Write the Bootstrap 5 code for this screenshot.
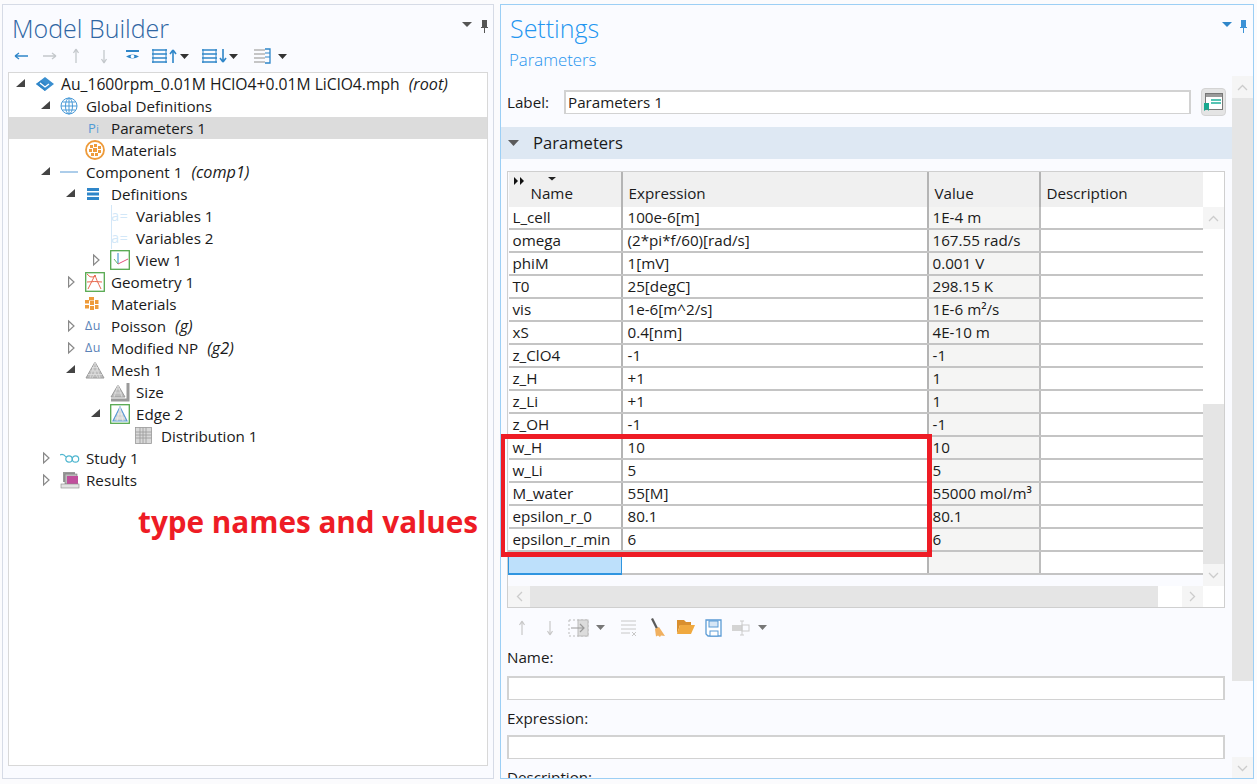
<!DOCTYPE html>
<html lang="en"><head><meta charset="utf-8"><title>Model Builder</title>
<link href="https://cdn.jsdelivr.net/npm/bootstrap@5.3.0/dist/css/bootstrap.min.css" rel="stylesheet">
<style>
html,body{height:784px;overflow:hidden}
body{background:#fbfbfd;font-family:"Open Sans","Noto Sans",sans-serif;font-size:15.2px;color:#1a1a1a;padding:4px 3px 0 2px;line-height:22px}
svg{display:block;flex:none}
.panel{height:775px;background:#fafbff;border:1px solid #d6dbe6;overflow:hidden;position:relative}
.left{width:492px;margin-right:6px;padding:0 5px}
.right{width:754px;border-color:#9ccff5}
.ptitle{font-weight:300;font-size:25px;line-height:34px;color:#2f66a3;padding-left:4px;padding-top:6px}
.right .ptitle{color:#2396f0;padding-left:9px}
.sub{font-size:16.8px;font-weight:300;color:#2694ee;line-height:24px;padding-left:8px;margin-top:3px}
.pin{position:absolute;top:14px}
.pinl{left:457px}.pinr{left:721px}
.tbar{height:24px;padding-left:6px;margin-top:-1px}
.tree{height:694px;background:#fff;border:1px solid #d8d8d8;margin-top:4px}
.r{height:22px;white-space:nowrap;font-size:15.2px}
.r.sel{background:#dcdcdc}
.rootname{font-size:15.7px}
.l0{padding-left:6px}.l1{padding-left:31px}.l2{padding-left:56px}.l3{padding-left:81px}.l4{padding-left:106px}
.tri{width:20px;flex:none;display:flex}
.ic{width:26px;flex:none;display:flex;align-items:center;height:22px;position:relative}
.gly{font-size:13px;color:#4f9ad6;letter-spacing:.5px;line-height:22px}
.gly small{font-size:10px}
.gly.vr{color:#4ea4e6;font-size:14.5px;font-weight:500;margin-left:1px}
.gly.pi{margin-left:3px}
.gly.du{color:#5b83b8;font-size:12.5px}
.a{font-style:italic;margin-left:9px;font-size:16.2px}
.note{position:absolute;left:135px;top:497px;color:#ee1c25;font-weight:700;font-size:29.7px;line-height:40px;white-space:nowrap}
.head{height:71px}
.body2{height:703px}
.main{width:731px;overflow:hidden;padding:0 6px}
.lab{height:51px}
.lab label{width:57px}
.fld{height:24px;background:#fff;border:2px solid #d2d2d2;border-bottom-width:1px;padding-left:2px;line-height:20px}
.lab .fld{width:627px}
.helpb{width:25px;height:28px;background:#e4e4e4;border:1px solid #d4d4d4;border-radius:4px;margin-left:10px}
.sec{height:32px;background:#dee8f3;margin:0 -6px;padding-left:7px;font-size:16.6px}
.sec span{margin-left:13px}
.grid{margin-top:12px;width:718px;height:437px;border:solid #cfcfcf;border-width:1px 1px 2px 1px}
.cols{height:414px}
.tw{width:695px}
.ptable{table-layout:fixed;width:695px;border-collapse:collapse;margin:0;font-size:15.2px}
.c1{width:113px}.c2{width:306px}.c3{width:112px}
.ptable>:not(caption)>*>*{padding:0 0 0 4px;height:23px;line-height:20px;border:0;border-bottom:2px solid #c4c4c4;border-right:2px solid #b4b4b4;background:#fff;white-space:nowrap;overflow:hidden;color:#1a1a1a;box-shadow:none}
.ptable>thead>tr>th{height:35px;background:#f0f0f0;font-weight:400;padding:0 0 4px 6px;border-bottom:0;position:relative;vertical-align:bottom}
.ptable>thead>tr>th.n{padding-left:22px}
.ptable>thead>tr>th.dh{border-right:0}
.ptable>tbody>tr>td:nth-child(2){padding-left:5px}
.ptable>tbody>tr>td.v{background:#f5f5f4;padding-left:4px;border-right-color:#bdbdbd}
.ptable>tbody>tr>td.d{border-right:0}
.ptable>tbody>tr>td.cur{background:#bde0fb;border:1px solid #2f95e0;border-bottom:2px solid #2f95e0}
.ptable>tbody>tr:first-child>*{height:22px}
.vs{width:21px}
.vs .sp{height:35px;background:#fff}
.sb{background:#f5f5f5;height:22px}
.wh{background:#fff}
.gr{background:#e5e5e5}
.vthumb{height:160px}
.othumb{height:583px}
.hs{height:21px}
.hs .sb{height:21px}
.hl{width:22px}.htrack{width:628px}.hgap{width:24px}.hr{width:21px}
.tool2{height:39px;padding-left:8px}
.tlabel{height:20px;line-height:20px;margin-top:1px}
.tool2+.tlabel{margin-top:0}
.grid-f{height:24px;width:718px;margin-top:7px;margin-bottom:8px}
.tool2+.tlabel+.grid-f{margin-top:9px}
.cut{line-height:20px;margin-top:4px}
.ovs{width:21px}
.box{position:absolute;left:-1px;top:429px;width:432px;height:123px;border:5px solid #ee1c25;pointer-events:none}
</style></head>
<body class="d-flex align-items-start">
<svg width="0" height="0" class="position-absolute"><defs>
 <symbol id="open" viewBox="0 0 20 22"><path d="M1 14h9V6z" fill="#444"/></symbol>
 <symbol id="closed" viewBox="0 0 20 22"><path d="M3.600 6l5.400 5-5.400 5z" fill="#fff" stroke="#888" stroke-width="1.200"/></symbol>
 <symbol id="up" viewBox="0 0 11 7"><path d="M1 6l4.500-4.500L10 6" fill="none" stroke="#ccc" stroke-width="1.300"/></symbol>
 <symbol id="down" viewBox="0 0 11 7"><path d="M1 1l4.500 4.500L10 1" fill="none" stroke="#ccc" stroke-width="1.300"/></symbol>
</defs></svg>
<section class="panel left">
 <div class="ptitle">Model Builder</div>
 <svg class="pin pinl" width="30" height="14" viewBox="0 0 30 14"><path d="M2 3h10L7 8z" fill="#555"/><path d="M21 1h6v7h1v1h-3v5h-1V9h-3V8h1V1z" fill="#555"/></svg>
 <div class="tbar d-flex align-items-center">
  <svg width="280" height="18" viewBox="0 0 280 18">
   <g fill="none" stroke-width="1.300">
    <path d="M1 9h13M1 9l4-3M1 9l4 3" stroke="#2f86c9"/>
    <path d="M29 9h13M42 9l-4-3M42 9l-4 3" stroke="#c4c8cc"/>
    <path d="M62 2v14M62 2l-2.500 4M62 2l2.500 4" stroke="#c4c8cc"/>
    <path d="M90 16V3M90 16l-2.500-4M90 16l2.500-4" stroke="#c4c8cc"/>
   </g>
   <rect x="112" y="3" width="13" height="2" fill="#2f86c9"/>
   <path d="M112 9.500q6.500-4 13 0q-6.500 4-13 0z" fill="#2f86c9"/><circle cx="118.500" cy="9.500" r="1.800" fill="#fff"/>
   <g stroke="#2f86c9" stroke-width="1.600">
    <path d="M138 3h15M138 7h15M138 11h15M138 15h15"/>
    <path d="M139 2v14M152 2v14" stroke-width="1"/>
    <path d="M159 16V3M159 3l-3 4M159 3l3 4" fill="none"/>
    <path d="M188 3h15M188 7h15M188 11h15M188 15h15"/>
    <path d="M189 2v14M202 2v14" stroke-width="1"/>
    <path d="M209 2v13M209 15l-3-4M209 15l3-4" fill="none"/>
   </g>
   <path d="M166 7h9l-4.500 5zM215 7h9l-4.500 5zM264 7h9l-4.500 5z" fill="#333"/>
   <g stroke="#b4b4b4" stroke-width="1.600"><path d="M240 3h11M240 7h11M240 11h11M240 15h11"/></g>
   <path d="M251 2h5v14h-5" fill="none" stroke="#2f86c9" stroke-width="1.300"/>
   <path d="M251 6h5M251 10h5" stroke="#2f86c9"/>
  </svg>
 </div>
 <div class="tree">
  <div class="r d-flex l0"><div class="tri"><svg width="20" height="22"><use href="#open"/></svg></div><div class="ic"><svg width="20" height="16" viewBox="0 0 20 16"><path d="M10 1l9 7-9 7-9-7z" fill="#3a8fd0"/><path d="M1 8l5-3.500 5 3.500-1 7z" fill="#2f86c9"/><path d="M5 7l5 4 4-3" fill="none" stroke="#fff" stroke-width="1.300"/></svg></div><span class="rootname">Au_1600rpm_0.01M HClO4+0.01M LiClO4.mph</span><span class="a">(root)</span></div>
  <div class="r d-flex l1"><div class="tri"><svg width="20" height="22"><use href="#open"/></svg></div><div class="ic"><svg width="18" height="18" viewBox="0 0 18 18" fill="none" stroke="#4b9bd8" stroke-width="1"><circle cx="9" cy="9" r="8"/><ellipse cx="9" cy="9" rx="3.500" ry="8"/><path d="M1 9h16M2.500 5h13M2.500 13h13M9 1v16"/></svg></div><span>Global Definitions</span></div>
  <div class="r d-flex l2 sel"><div class="tri"></div><div class="ic"><span class="gly pi">P<small>i</small></span></div><span>Parameters 1</span></div>
  <div class="r d-flex l2"><div class="tri"></div><div class="ic"><svg width="20" height="20" viewBox="0 0 20 20"><circle cx="10" cy="10" r="9" fill="#fff" stroke="#ee9b3a" stroke-width="1.800"/><g fill="#ee9b3a"><rect x="5" y="5" width="3" height="3"/><rect x="9" y="4" width="3" height="3"/><rect x="13" y="6" width="3" height="3"/><rect x="4" y="9" width="3" height="3"/><rect x="8" y="8" width="4" height="4"/><rect x="13" y="10" width="3" height="3"/><rect x="6" y="13" width="3" height="3"/><rect x="10" y="13" width="3" height="3"/></g></svg></div><span>Materials</span></div>
  <div class="r d-flex l1"><div class="tri"><svg width="20" height="22"><use href="#open"/></svg></div><div class="ic"><svg width="19" height="4"><path d="M0 2h18" stroke="#5b9bd5" stroke-width="1"/></svg></div><span>Component 1</span><span class="a">(comp1)</span></div>
  <div class="r d-flex l2"><div class="tri"><svg width="20" height="22"><use href="#open"/></svg></div><div class="ic"><svg width="20" height="14" viewBox="0 0 20 14" fill="#2f86c9"><rect x="2" y="1" width="12" height="3"/><rect x="2" y="5.500" width="12" height="3"/><rect x="2" y="10" width="12" height="3"/></svg></div><span>Definitions</span></div>
  <div class="r d-flex l3"><div class="tri"></div><div class="ic"><span class="gly vr">a=</span></div><span>Variables 1</span></div>
  <div class="r d-flex l3"><div class="tri"></div><div class="ic"><span class="gly vr">a=</span></div><span>Variables 2</span></div>
  <div class="r d-flex l3"><div class="tri"><svg width="20" height="22"><use href="#closed"/></svg></div><div class="ic"><svg width="20" height="20" viewBox="0 0 20 20" fill="none"><rect x=".7" y=".7" width="18.600" height="18.600" stroke="#55a84f" stroke-width="1.300"/><path d="M8 14V3" stroke="#2f86c9"/><path d="M8 14l10-5" stroke="#e0527a"/><path d="M8 14l-4-5" stroke="#68b868"/></svg></div><span>View 1</span></div>
  <div class="r d-flex l2"><div class="tri"><svg width="20" height="22"><use href="#closed"/></svg></div><div class="ic"><svg width="20" height="20" viewBox="0 0 20 20" fill="none"><rect x=".7" y=".7" width="18.600" height="18.600" stroke="#55a84f" stroke-width="1.300"/><path d="M2 2q3 4 6 3t2-2q1 4 6 14M10 3L3 17M2 10q8-1 15 0" stroke="#e8694f"/></svg></div><span>Geometry 1</span></div>
  <div class="r d-flex l2"><div class="tri"></div><div class="ic"><svg width="14" height="14" viewBox="0 0 14 14" fill="#ee9b3a"><rect x="4" y="0" width="5" height="3.500"/><rect x="0" y="3" width="4" height="3.500"/><rect x="5" y="4" width="4" height="4"/><rect x="10" y="3" width="3.500" height="4"/><rect x="0" y="8" width="4" height="3.500"/><rect x="5" y="9" width="4" height="4"/><rect x="10" y="8" width="3.500" height="4"/></svg></div><span>Materials</span></div>
  <div class="r d-flex l2"><div class="tri"><svg width="20" height="22"><use href="#closed"/></svg></div><div class="ic"><span class="gly du">Δu</span></div><span>Poisson</span><span class="a">(g)</span></div>
  <div class="r d-flex l2"><div class="tri"><svg width="20" height="22"><use href="#closed"/></svg></div><div class="ic"><span class="gly du">Δu</span></div><span>Modified NP</span><span class="a">(g2)</span></div>
  <div class="r d-flex l2"><div class="tri"><svg width="20" height="22"><use href="#open"/></svg></div><div class="ic"><svg width="20" height="18" viewBox="0 0 20 18"><path d="M10 1l9 16H1z" fill="#bdbdbd" stroke="#9a9a9a"/><path d="M7 6.500h6M5 10h10M3 13.500h14M10 1L5 17M10 1l5 16M7 6.500L13 17M13 6.500L7 17" stroke="#e3e3e3" stroke-width=".7" fill="none"/></svg></div><span>Mesh 1</span></div>
  <div class="r d-flex l3"><div class="tri"></div><div class="ic"><svg width="20" height="20" viewBox="0 0 20 20"><path d="M8 3l7 12H1z" fill="#bdbdbd" stroke="#9a9a9a"/><path d="M4 11h8M6 7h4M8 3l-4 12M8 3l4 12" stroke="#e3e3e3" stroke-width=".7"/><path d="M18 1v17H1" fill="none" stroke="#9a9a9a" stroke-width="3"/></svg></div><span>Size</span></div>
  <div class="r d-flex l3"><div class="tri"><svg width="20" height="22"><use href="#open"/></svg></div><div class="ic"><svg width="20" height="20" viewBox="0 0 20 20" fill="none"><rect x=".7" y=".7" width="18.600" height="18.600" fill="#fff" stroke="#55a84f" stroke-width="1.300"/><path d="M10 3l7 14H3z" fill="#d4d4d4" stroke="#5b9bd5" stroke-width="1.200"/><path d="M7 10h6M5 14h10M10 3l-3 14M10 3l3 14" stroke="#eee" stroke-width=".7"/></svg></div><span>Edge 2</span></div>
  <div class="r d-flex l4"><div class="tri"></div><div class="ic"><svg width="18" height="18" viewBox="0 0 18 18" fill="#d8d8d8" stroke="#9a9a9a" stroke-width=".8"><rect x=".5" y=".5" width="16" height="16"/><path d="M5 .5v16M8 .5v16M11 .5v16M.5 5h16M.5 8h16M.5 11h16" fill="none"/></svg></div><span>Distribution 1</span></div>
  <div class="r d-flex l1"><div class="tri"><svg width="20" height="22"><use href="#closed"/></svg></div><div class="ic"><svg width="20" height="10" viewBox="0 0 20 10" fill="none" stroke="#4fb6cf" stroke-width="1.200"><circle cx="9" cy="6" r="3.200"/><circle cx="15.500" cy="6" r="3.200"/><path d="M0 2q3-2 6 2"/></svg></div><span>Study 1</span></div>
  <div class="r d-flex l1"><div class="tri"><svg width="20" height="22"><use href="#closed"/></svg></div><div class="ic"><svg width="20" height="18" viewBox="0 0 20 18"><rect x="3" y="1" width="12" height="10" fill="#999"/><rect x="5" y="3" width="12" height="10" fill="#bbb" stroke="#777" stroke-width=".6"/><rect x="7" y="5" width="11" height="8" fill="#c04f9c"/><rect x="1" y="13" width="18" height="4" fill="#e2e2e2" stroke="#888" stroke-width=".6"/></svg></div><span>Results</span></div>
 </div>
 <div class="note">type names and values</div>
</section>
<section class="panel right">
 <div class="head">
  <div class="ptitle">Settings</div>
  <div class="sub">Parameters</div>
  <svg class="pin pinr" width="30" height="14" viewBox="0 0 30 14"><path d="M0 3h10L5 8z" fill="#2f86c9"/><path d="M18 1h6v7h1v1h-3v5h-1V9h-3V8h1V1z" fill="#3c92d6"/></svg>
 </div>
 <div class="body2 d-flex">
  <div class="main">
   <div class="lab d-flex align-items-center">
    <label>Label:</label><div class="fld">Parameters 1</div>
    <div class="helpb d-flex align-items-center justify-content-center"><svg width="21" height="20" viewBox="0 0 21 20"><rect x="2.500" y="1.500" width="17" height="16" fill="#fff" stroke="#777"/><rect x="3" y="2" width="16" height="3" fill="#9a9a9a"/><path d="M8 8h10M8 11h10" stroke="#20b09a" stroke-width="1.300"/><path d="M1 11h5v8l-2-2-3 2z" fill="#18a88f"/></svg></div>
   </div>
   <div class="sec d-flex align-items-center"><svg width="12" height="8"><path d="M0 1h11L5.500 7z" fill="#5a5a5a"/></svg><span>Parameters</span></div>
   <div class="grid">
    <div class="cols d-flex">
     <div class="tw">
      <table class="table ptable">
       <colgroup><col class="c1"><col class="c2"><col class="c3"><col></colgroup>
       <thead><tr><th class="n" scope="col">Name<svg class="position-absolute top-0 start-0" width="50" height="14" viewBox="0 0 50 14"><path d="M5 5l4 4-4 4zM11 5l4 4-4 4z" fill="#111"/><path d="M39 5h8l-4 3.500z" fill="#222"/></svg></th><th scope="col">Expression</th><th scope="col">Value</th><th class="dh" scope="col">Description</th></tr></thead>
       <tbody>
        <tr><td>L_cell</td><td>100e-6[m]</td><td class="v">1E-4 m</td><td class="d"></td></tr>
        <tr><td>omega</td><td>(2*pi*f/60)[rad/s]</td><td class="v">167.55 rad/s</td><td class="d"></td></tr>
        <tr><td>phiM</td><td>1[mV]</td><td class="v">0.001 V</td><td class="d"></td></tr>
        <tr><td>T0</td><td>25[degC]</td><td class="v">298.15 K</td><td class="d"></td></tr>
        <tr><td>vis</td><td>1e-6[m^2/s]</td><td class="v">1E-6 m²/s</td><td class="d"></td></tr>
        <tr><td>xS</td><td>0.4[nm]</td><td class="v">4E-10 m</td><td class="d"></td></tr>
        <tr><td>z_ClO4</td><td>-1</td><td class="v">-1</td><td class="d"></td></tr>
        <tr><td>z_H</td><td>+1</td><td class="v">1</td><td class="d"></td></tr>
        <tr><td>z_Li</td><td>+1</td><td class="v">1</td><td class="d"></td></tr>
        <tr><td>z_OH</td><td>-1</td><td class="v">-1</td><td class="d"></td></tr>
        <tr><td>w_H</td><td>10</td><td class="v">10</td><td class="d"></td></tr>
        <tr><td>w_Li</td><td>5</td><td class="v">5</td><td class="d"></td></tr>
        <tr><td>M_water</td><td>55[M]</td><td class="v">55000 mol/m³</td><td class="d"></td></tr>
        <tr><td>epsilon_r_0</td><td>80.1</td><td class="v">80.1</td><td class="d"></td></tr>
        <tr><td>epsilon_r_min</td><td>6</td><td class="v">6</td><td class="d"></td></tr>
        <tr><td class="cur"></td><td></td><td class="v"></td><td class="d"></td></tr>
       </tbody>
      </table>
     </div>
     <div class="vs d-flex flex-column">
      <div class="sp"></div>
      <div class="sb d-flex align-items-center justify-content-center"><svg width="11" height="7"><use href="#up"/></svg></div>
      <div class="wh flex-grow-1"></div>
      <div class="gr vthumb"></div>
      <div class="sb d-flex align-items-center justify-content-center"><svg width="11" height="7"><use href="#down"/></svg></div>
     </div>
    </div>
    <div class="hs d-flex">
     <div class="sb hl d-flex align-items-center justify-content-center"><svg width="7" height="11"><path d="M6 1L1.500 5.500 6 10" fill="none" stroke="#ccc" stroke-width="1.300"/></svg></div>
     <div class="gr htrack"></div>
     <div class="wh hgap"></div>
     <div class="sb hr d-flex align-items-center justify-content-center"><svg width="7" height="11"><path d="M1 1l4.500 4.500L1 10" fill="none" stroke="#ccc" stroke-width="1.300"/></svg></div>
     <div class="wh flex-grow-1"></div>
    </div>
   </div>
   <div class="tool2 d-flex align-items-center">
    <svg width="262" height="20" viewBox="0 0 262 20">
     <g fill="none" stroke="#c8c8c8" stroke-width="1.200"><path d="M7 3v14M7 3L4.500 7M7 3l2.500 4"/><path d="M35 17V3M35 17l-2.500-4M35 17l2.500-4"/></g>
     <rect x="54" y="2" width="19" height="16" fill="none" stroke="#bbb" stroke-dasharray="2 2"/><rect x="63" y="2" width="10" height="16" fill="#dcdcdc" stroke="#bbb"/><path d="M56 10h13M65 6l4 4-4 4" fill="none" stroke="#9a9a9a" stroke-width="1.200"/>
     <path d="M81 7h9l-4.500 5zM243 7h9l-4.500 5z" fill="#777"/>
     <g stroke="#c8c8c8"><path d="M106 3h15M106 7h15M106 11h15M106 15h9"/><path d="M117 14l4 4M121 14l-4 4"/></g>
     <path d="M136 1l2-1 5 10-2 1z" fill="#5a5a5a"/><path d="M140 11l4-2 6 9-4-.5-1 1.500-2-1.500-2 1z" fill="#f0b060"/>
     <path d="M162 5V2h7l2 2h5v3h-11l-3 9z" fill="#d98f2e"/><path d="M165 7h15l-4 9h-14z" fill="#f0a93f"/>
     <path d="M191 2h15v16h-13l-2-2z" fill="#fff" stroke="#5b9bd5" stroke-width="1.300"/><rect x="194" y="3" width="9" height="6" fill="#d6e6f5" stroke="#5b9bd5"/><rect x="195" y="13" width="8" height="5" fill="#fff" stroke="#5b9bd5"/>
     <rect x="217" y="7" width="10" height="6" fill="#d4d4d4"/><rect x="227" y="7" width="7" height="6" fill="none" stroke="#ccc"/><path d="M227 3v14M225 3h4M225 17h4" stroke="#ccc" fill="none"/>
    </svg>
   </div>
   <div class="tlabel">Name:</div>
   <div class="fld grid-f"></div>
   <div class="tlabel">Expression:</div>
   <div class="fld grid-f"></div>
   <div class="cut">Description:</div>
  </div>
  <div class="ovs d-flex flex-column">
   <div class="sb d-flex align-items-center justify-content-center"><svg width="11" height="7"><use href="#up"/></svg></div>
   <div class="gr othumb"></div>
   <div class="flex-grow-1"></div>
   <div class="sb d-flex align-items-center justify-content-center"><svg width="11" height="7"><use href="#down"/></svg></div>
  </div>
 </div>
 <div class="box"></div>
</section>
<script src="https://cdn.jsdelivr.net/npm/bootstrap@5.3.0/dist/js/bootstrap.bundle.min.js"></script>
</body></html>
